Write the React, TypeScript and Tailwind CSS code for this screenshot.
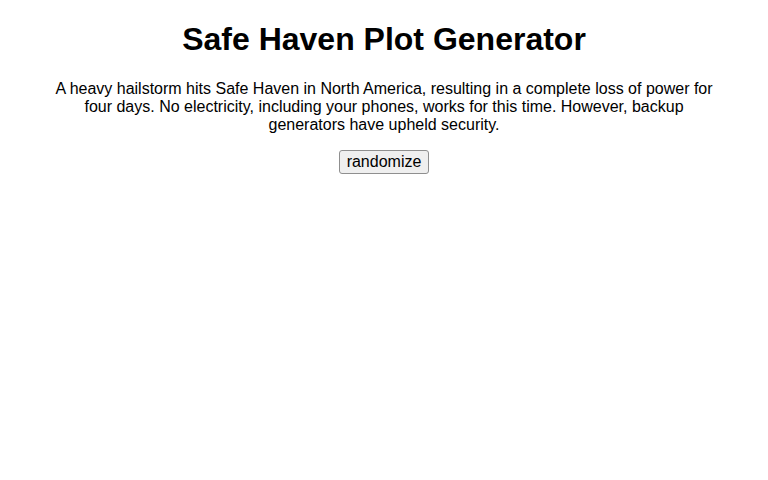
export default function App() {
  return (
    <div
      className="m-2 text-center text-black"
      style={{ fontFamily: '"Liberation Sans", Arial, sans-serif' }}
    >
      <h1 className="my-[21px] text-[32px] font-bold leading-[37px]">
        Safe Haven Plot Generator
      </h1>
      <p className="mx-auto mt-[22px] mb-[16px] max-w-[672px] text-base leading-[18px]">
        A heavy hailstorm hits Safe Haven in North America, resulting in a complete loss of power for
        four days. No electricity, including your phones, works for this time. However, backup
        generators have upheld security.
      </p>
      <button className="rounded-[3px] border border-[#8f8f8f] bg-[#efefef] px-[7px] py-[2px] text-base leading-[18px] text-black">
        randomize
      </button>
    </div>
  );
}
